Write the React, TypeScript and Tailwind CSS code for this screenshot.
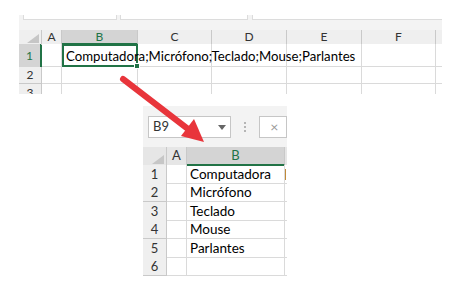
import type React from "react";

const TOP_COLS = "grid-cols-[23px_20px_76px_74px_75px_75px_74px_6px]";
const BOTTOM_COLS = "grid-cols-[24px_20px_98px_2px]";

const Corner: React.FC = () => (
  <svg width="12" height="9" viewBox="0 0 12 9" className="absolute right-[2px] bottom-[2px]">
    <polygon points="12,0 12,9 0,9" fill="#c6c6c6" />
  </svg>
);

const TopSheet: React.FC = () => {
  const letters = ["C", "D", "E", "F"];
  return (
    <div className="ml-[19px] mt-[15px] w-[423px] flex flex-col text-[#333]">
      {/* restos de la barra de fórmulas */}
      <div className="h-[15px] bg-[#f3f3f3] flex items-start">
        <div className="ml-[4px] w-[94px] h-[5px] bg-white border-x border-b border-[#dcdcdc]" />
        <div className="ml-[3px] w-[128px] h-[5px] bg-white border-x border-b border-[#dcdcdc]" />
        <div className="ml-[4px] flex-1 h-[5px] bg-white border-l border-b border-[#dcdcdc]" />
      </div>

      {/* encabezados */}
      <div className={`grid ${TOP_COLS} h-[14px] bg-[#efefef] text-[12px] leading-[13px]`}>
        <div className="relative border-r border-[#c9c9c9]">
          <Corner />
        </div>
        <div className="text-center border-r border-[#c9c9c9]">A</div>
        <div className="text-center bg-[#d4d4d4] text-[#217346] border-r border-[#c9c9c9] border-b-2 border-b-[#217346]">B</div>
        {letters.map((l) => (
          <div key={l} className="text-center border-r border-[#c9c9c9]">{l}</div>
        ))}
        <div />
      </div>

      {/* fila 1 */}
      <div className={`grid ${TOP_COLS} h-[23px] text-[13.2px]`}>
        <div className="bg-[#d4d4d4] border-r-2 border-[#217346] text-center text-[#217346] text-[12px] leading-[23px]">1</div>
        <div className="border-r border-b border-[#dadada]" />
        <div className="relative z-10 border-2 border-[#217346]">
          <span className="absolute left-[2px] top-[1px] leading-[18px] whitespace-nowrap text-black">
            Computadora;Micrófono;Teclado;Mouse;Parlantes
          </span>
          <div className="absolute -right-[4px] -bottom-[4px] w-[6px] h-[6px] bg-[#217346] border border-white" />
        </div>
        {letters.map((l) => (
          <div key={l} className="border-r border-b border-[#dadada]" />
        ))}
        <div className="border-b border-[#dadada]" />
      </div>

      {/* fila 2 */}
      <div className={`grid ${TOP_COLS} h-[17px]`}>
        <div className="bg-[#efefef] border-r border-b border-[#c9c9c9] text-center text-[12px] leading-[16px]">2</div>
        {[0, 1, 2, 3, 4, 5].map((i) => (
          <div key={i} className="border-r border-b border-[#dadada]" />
        ))}
        <div className="border-b border-[#dadada]" />
      </div>

      {/* fila 3 (cortada) */}
      <div className={`grid ${TOP_COLS} h-[10px] overflow-hidden`}>
        <div className="bg-[#efefef] border-r border-[#c9c9c9] text-center text-[12px] leading-[18px] overflow-hidden">3</div>
        {[0, 1, 2, 3, 4, 5].map((i) => (
          <div key={i} className="border-r border-[#dadada]" />
        ))}
        <div />
      </div>
    </div>
  );
};

const ITEMS = ["Computadora", "Micrófono", "Teclado", "Mouse", "Parlantes", ""];
const ROW_H = ["h-[18px]", "h-[19px]", "h-[18px]", "h-[19px]", "h-[18px]", "h-[19px]"];

const BottomSheet: React.FC = () => (
  <div className="ml-[143px] mt-[12px] w-[144px] flex flex-col text-[#333]">
    {/* barra de nombre */}
    <div className="h-[41px] bg-[#f3f3f3] flex items-start pt-[10px] pl-[5px] overflow-hidden">
      <div className="w-[94px] h-[22px] bg-white border border-[#c6c6c6] flex items-center justify-between px-[4px]">
        <span className="text-[13px] text-[#333]">B9</span>
        <svg width="8" height="5" viewBox="0 0 8 5">
          <polygon points="0,0 8,0 4,5" fill="#666" />
        </svg>
      </div>
      <div className="ml-[13px] mt-[6px] flex flex-col gap-[2px]">
        <div className="w-[2px] h-[2px] bg-[#b5b5b5]" />
        <div className="w-[2px] h-[2px] bg-[#b5b5b5]" />
        <div className="w-[2px] h-[2px] bg-[#b5b5b5]" />
      </div>
      <div className="ml-[13px] w-[30px] h-[22px] bg-white border border-[#c6c6c6] text-[14px] leading-[20px] text-[#999] pl-[10px]">
        ×
      </div>
    </div>

    {/* encabezados */}
    <div className={`grid ${BOTTOM_COLS} h-[18px] bg-[#e6e6e6] text-[13px] leading-[17px]`}>
      <div className="relative border-r border-[#c9c9c9]">
        <Corner />
      </div>
      <div className="text-center border-r border-[#c9c9c9]">A</div>
      <div className="text-center bg-[#d4d4d4] text-[#217346] border-r border-[#c9c9c9] border-b-2 border-b-[#217346]">B</div>
      <div />
    </div>

    {ITEMS.map((item, i) => (
      <div key={i} className={`grid ${BOTTOM_COLS} ${ROW_H[i]} text-[13.5px]`}>
        <div className="bg-[#efefef] border-r border-b border-[#c9c9c9] text-center text-[13px] leading-[18px]">{i + 1}</div>
        <div className="border-r border-b border-[#dadada]" />
        <div className="border-r border-b border-[#dadada] pl-[3px] leading-[18px] text-black whitespace-nowrap">{item}</div>
        <div className="border-b border-[#dadada] overflow-hidden">
          {i === 0 && <div className="mt-[4px] w-[1px] h-[11px] bg-[#c08a3a]" />}
        </div>
      </div>
    ))}
  </div>
);

export default function App() {
  return (
    <div className="relative w-[474px] h-[293px] bg-white overflow-hidden font-['Lato','Open_Sans',sans-serif]">
      <TopSheet />
      <BottomSheet />
      {/* flecha roja */}
      <svg className="absolute left-0 top-0 z-20" width="474" height="293" viewBox="0 0 474 293">
        <line x1="123" y1="79" x2="188" y2="129" stroke="#e8353b" strokeWidth="6" strokeLinecap="round" />
        <polygon points="204,142 181,136 194,119" fill="#e8353b" />
      </svg>
    </div>
  );
}
